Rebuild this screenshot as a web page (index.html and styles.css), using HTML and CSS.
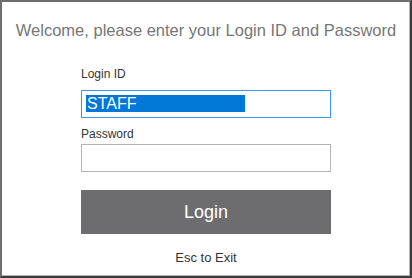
FILE: index.html
```html
<!DOCTYPE html>
<html>
 <head>
  <title>Login</title>
  <link rel="stylesheet" href="styles.css">
 </head>
 <body>
 <div id="frame">
  <h2 class="welcome">Welcome, please enter your Login ID and Password</h2>

  <form class="login" onsubmit="return false;">
    <div class="entry">
      <label for="loginid">Login ID</label>
      <div class="field focused" id="loginid"><span class="selected">STAFF</span></div>
    </div>

    <div class="entry">
      <label for="password">Password</label>
      <div class="field" id="password"></div>
    </div>

    <button class="submit">Login</button>
  </form>

  <div class="hint">Esc to Exit</div>
 </div>
 </body>
</html>
```

FILE: styles.css
```css
html, body {
  margin: 0;
  padding: 0;
}
body {
  font-family: "Liberation Sans", Arial, sans-serif;
  background: #fff;
}
#frame {
  width: 412px;
  height: 278px;
  box-sizing: border-box;
  border-top: 2px solid #6e6e6e;
  border-left: 2px solid #6e6e6e;
  border-right: 2px solid #3c3c3c;
  border-bottom: 2px solid #3c3c3c;
  box-shadow: inset -1px -1px 0 #b4b4b4;
  background: #fff;
}
.welcome {
  margin: 0;
  padding-top: 18px;
  font-size: 16.5px;
  font-weight: normal;
  color: #767676;
  text-align: center;
  line-height: 20px;
}
.login {
  width: 250px;
  margin: 0 0 0 79px;
  padding-top: 27px;
}
.entry label {
  display: block;
  font-size: 12px;
  color: #333;
  line-height: 14px;
}
.entry {
  margin-bottom: 9px;
}
.field {
  box-sizing: border-box;
  height: 28px;
  margin-top: 3px;
  border: 1px solid #b4b4b4;
  padding: 4px 4px;
  font-size: 16px;
  line-height: 18px;
}
.field.focused {
  border-color: #3c96ff;
  margin-top: 9px;
}
.selected {
  display: inline-block;
  width: 158px;
  background: #0078d7;
  color: #fff;
  line-height: 17px;
  padding-left: 1px;
}
.submit {
  display: block;
  width: 250px;
  height: 44px;
  margin-top: 18px;
  border: none;
  background: #6d6d70;
  color: #fff;
  font-family: inherit;
  font-size: 18px;
}
.hint {
  text-align: center;
  font-size: 13px;
  color: #333;
  margin-top: 16px;
  line-height: 16px;
}
```
